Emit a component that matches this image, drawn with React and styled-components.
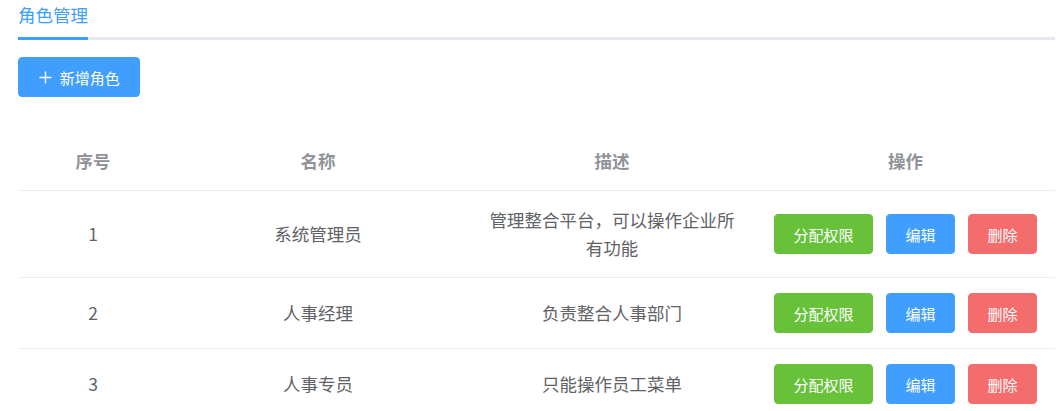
import React from "react";
import styled, { createGlobalStyle } from "styled-components";

const GlobalStyle = createGlobalStyle`
    html, body {
        margin: 0;
        padding: 0;
        background: #ffffff;
        font-family: "Noto Sans CJK SC", "Liberation Sans", sans-serif;
    }
`;

const Page = styled.div`
    padding: 0 3px 0 18px;
`;

const TabsHeader = styled.div`
    display: flex;
    border-bottom: 3px solid #e4e7ed;
`;

const TabItem = styled.div`
    font-size: 17.5px;
    line-height: 30px;
    padding-bottom: 7px;
    margin-bottom: -3px;
    color: ${(p) => (p.$active ? "#409eff" : "#303133")};
    border-bottom: 3px solid ${(p) => (p.$active ? "#409eff" : "transparent")};
`;

const Toolbar = styled.div`
    padding-top: 17px;
    padding-bottom: 35px;
`;

const Button = styled.button`
    display: inline-flex;
    align-items: center;
    justify-content: center;
    height: 40px;
    padding: 0 18.75px;
    border: 1px solid ${(p) => p.$color};
    background: ${(p) => p.$color};
    color: #ffffff;
    font-family: inherit;
    font-size: 15px;
    border-radius: 4px;
    cursor: pointer;
    white-space: nowrap;

    svg {
        margin-right: 7px;
    }
`;

const Table = styled.table`
    width: 1037px;
    table-layout: fixed;
    border-collapse: collapse;
    font-size: 17.5px;
    color: #606266;
`;

const Th = styled.th`
    padding: 15px 0;
    line-height: 28px;
    font-weight: bold;
    color: #909399;
    text-align: center;
    border-bottom: 1px solid #ebeef5;
`;

const Td = styled.td`
    padding: 15px ${(p) => p.$pad || "12.5px"};
    line-height: 28px;
    text-align: center;
    border-bottom: 1px solid #ebeef5;
    word-break: break-all;
`;

const Actions = styled.div`
    display: flex;
    justify-content: center;
    gap: 12.5px;
`;

const PlusIcon = () => (
    <svg width="15" height="15" viewBox="0 0 15 15" fill="none">
        <path d="M7.5 1.5v12M1.5 7.5h12" stroke="#fff" strokeWidth="1.4" />
    </svg>
);

const roles = [
    { id: 1, name: "系统管理员", desc: "管理整合平台，可以操作企业所有功能" },
    { id: 2, name: "人事经理", desc: "负责整合人事部门" },
    { id: 3, name: "人事专员", desc: "只能操作员工菜单" },
];

export default function App() {
    return (
        <Page>
            <GlobalStyle />
            <TabsHeader>
                <TabItem $active>角色管理</TabItem>
            </TabsHeader>
            <Toolbar>
                <Button $color="#409eff">
                    <PlusIcon />
                    新增角色
                </Button>
            </Toolbar>
            <Table>
                <colgroup>
                    <col style={{ width: 150 }} />
                    <col style={{ width: 300 }} />
                    <col style={{ width: 288 }} />
                    <col style={{ width: 299 }} />
                </colgroup>
                <thead>
                    <tr>
                        <Th>序号</Th>
                        <Th>名称</Th>
                        <Th>描述</Th>
                        <Th>操作</Th>
                    </tr>
                </thead>
                <tbody>
                    {roles.map((r) => (
                        <tr key={r.id}>
                            <Td>{r.id}</Td>
                            <Td>{r.name}</Td>
                            <Td $pad="16px">{r.desc}</Td>
                            <Td>
                                <Actions>
                                    <Button $color="#67c23a">分配权限</Button>
                                    <Button $color="#409eff">编辑</Button>
                                    <Button $color="#f56c6c">删除</Button>
                                </Actions>
                            </Td>
                        </tr>
                    ))}
                </tbody>
            </Table>
        </Page>
    );
}
